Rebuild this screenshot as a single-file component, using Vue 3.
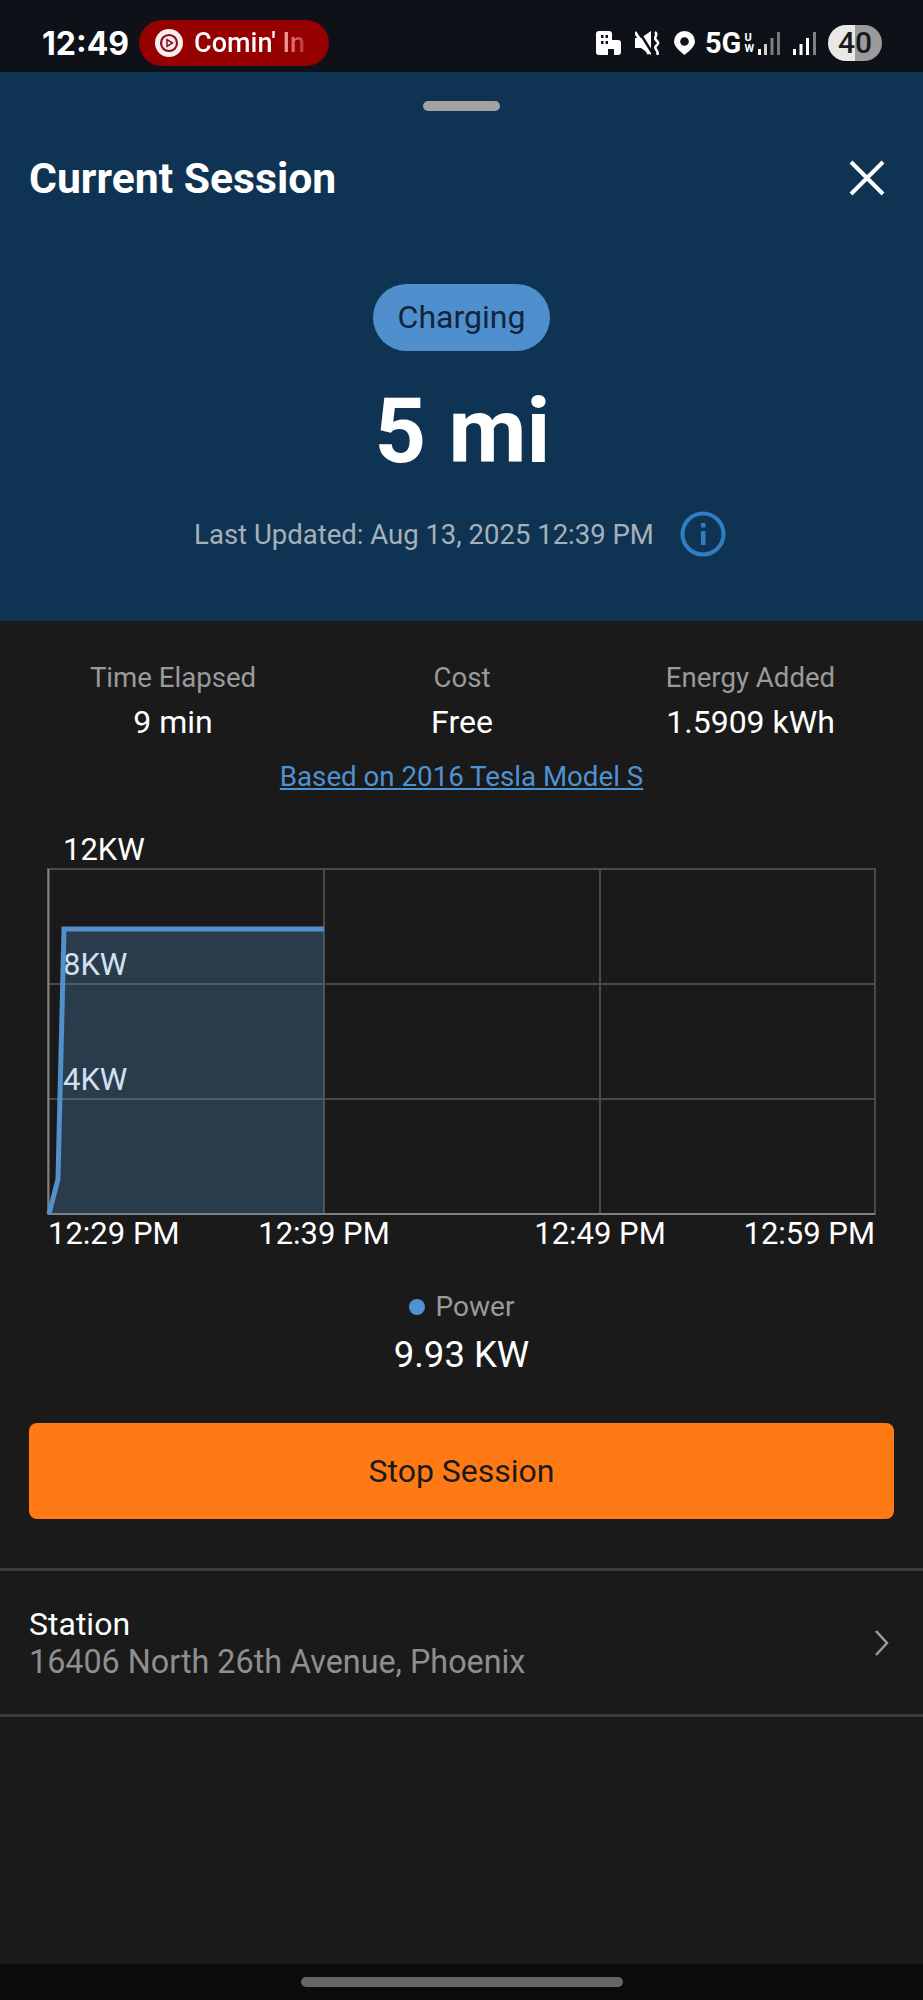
<script setup>
const stats = [
  { label: 'Time Elapsed', value: '9 min' },
  { label: 'Cost', value: 'Free' },
  { label: 'Energy Added', value: '1.5909 kWh' }
]
const times = [
  { x: 48, text: '12:29 PM', anchor: 'start' },
  { x: 324, text: '12:39 PM', anchor: 'middle' },
  { x: 600, text: '12:49 PM', anchor: 'middle' },
  { x: 875, text: '12:59 PM', anchor: 'end' }
]
const gridX = [324, 600]
const gridY = [983, 1098]
</script>

<template>
  <div class="screen">
    <div class="statusbar">
      <div class="status-left">
        <span class="clock">12:49</span>
        <div class="media-chip">
          <svg class="yt" width="28" height="28" viewBox="0 0 28 28">
            <circle cx="14" cy="14" r="14" fill="#f6eeee" />
            <circle cx="14" cy="14" r="8" fill="none" stroke="#8c0a1a" stroke-width="2.200" />
            <path d="M12 10.500v7l5.500-3.500z" fill="none" stroke="#8c0a1a" stroke-width="1.500" />
          </svg>
          <span class="chip-text">Comin' In</span>
        </div>
      </div>
      <div class="status-right">
        <svg width="25" height="24" viewBox="0 0 25 24" fill="#fff">
          <path d="M0 3a3 3 0 0 1 3-3h10a3 3 0 0 1 3 3v6h6a3 3 0 0 1 3 3v9a3 3 0 0 1-3 3h-4v-6h-6v6H3a3 3 0 0 1-3-3z" />
          <rect x="5" y="4" width="2.500" height="3" fill="#0e1118" />
          <rect x="9.500" y="4" width="2.500" height="3" fill="#0e1118" />
          <rect x="5" y="10" width="2.500" height="3" fill="#0e1118" />
          <rect x="9.500" y="10" width="2.500" height="3" fill="#0e1118" />
        </svg>
        <svg class="gap-mute" width="25" height="24" viewBox="0 0 25 24">
          <path d="M0 7h6l10-7v24L6 17H0z" fill="#fff" />
          <path d="M3-1l15 24" stroke="#0e1118" stroke-width="2.500" />
          <path d="M0 1l14 22" stroke="#fff" stroke-width="3" />
          <path d="M20 1c4 3-2 5 1 8s3 3 0 6 4 5 1 9" fill="none" stroke="#fff" stroke-width="2.500" />
        </svg>
        <svg class="gap-pin" width="21" height="24" viewBox="0 0 21 24">
          <path d="M10.500 0a10.500 10.500 0 0 1 10.500 10.500c0 5-6 10-10.500 13.500C6 20.500 0 15.500 0 10.500A10.500 10.500 0 0 1 10.500 0z" fill="#fff" />
          <circle cx="10.500" cy="10.500" r="4.300" fill="#0e1118" />
        </svg>
        <span class="net">5G</span>
        <span class="uw"><i>U</i><i>W</i></span>
        <svg class="bars" width="22" height="23" viewBox="0 0 22 23">
          <rect x="0" y="17" width="3" height="6" fill="#fff" />
          <rect x="6" y="12" width="3" height="11" fill="#cfcfcf" />
          <rect x="12.500" y="6" width="3" height="17" fill="#808080" />
          <rect x="19" y="0" width="3" height="23" fill="#777" />
        </svg>
        <svg class="bars second" width="23" height="23" viewBox="0 0 23 23">
          <rect x="0" y="17" width="3" height="6" fill="#fff" />
          <rect x="6.500" y="12" width="3" height="11" fill="#fff" />
          <rect x="13" y="6" width="3" height="17" fill="#fff" />
          <rect x="20" y="0" width="3" height="23" fill="#808080" />
        </svg>
        <div class="battery">40</div>
      </div>
    </div>

    <div class="hero">
      <div class="grabber"></div>
      <div class="title-row">
        <h1>Current Session</h1>
        <svg class="close" width="36" height="36" viewBox="0 0 36 36">
          <path d="M2 2l32 32M34 2L2 34" stroke="#fff" stroke-width="4" fill="none" />
        </svg>
      </div>
      <div class="pill">Charging</div>
      <div class="range">5 mi</div>
      <div class="updated">
        <span>Last Updated: Aug 13, 2025 12:39 PM</span>
        <svg width="46" height="46" viewBox="0 0 46 46">
          <circle cx="23" cy="23" r="20.500" fill="none" stroke="#2f7ec4" stroke-width="4" />
          <rect x="21" y="20" width="4.500" height="14" fill="#2f7ec4" />
          <rect x="21" y="12" width="4.500" height="4.500" fill="#2f7ec4" />
        </svg>
      </div>
    </div>

    <div class="body">
      <div class="stats">
        <div v-for="s in stats" :key="s.label" class="stat">
          <div class="stat-label">{{ s.label }}</div>
          <div class="stat-value">{{ s.value }}</div>
        </div>
      </div>
      <a class="vehicle">Based on 2016 Tesla Model S</a>

      <svg class="chart" width="923" height="441" viewBox="0 812 923 441">
        <text x="63" y="859" class="axis">12KW</text>
        <text x="63" y="974" class="axis">8KW</text>
        <text x="63" y="1089" class="axis">4KW</text>
        <rect x="48" y="868" width="827" height="345" fill="none" stroke="#4a4a4a" stroke-width="2" />
        <line v-for="x in gridX" :key="x" :x1="x" :x2="x" y1="868" y2="1213" stroke="#4a4a4a" stroke-width="2" />
        <line v-for="y in gridY" :key="y" x1="48" x2="875" :y1="y" :y2="y" stroke="#4a4a4a" stroke-width="2" />
        <line x1="48.500" x2="48.500" y1="868" y2="1213" stroke="#808080" stroke-width="2" />
        <line x1="48" x2="875" y1="1213" y2="1213" stroke="#808080" stroke-width="2" />
        <path d="M49 1213L58 1178L64 928H324V1213z" fill="rgba(85,150,210,0.28)" />
        <path d="M49 1213L58 1178L64 928H324" fill="none" stroke="#5190cb" stroke-width="5" />
        <text v-for="t in times" :key="t.text" :x="t.x" y="1243" :text-anchor="t.anchor" class="axis">{{ t.text }}</text>
      </svg>

      <div class="legend"><span class="dot"></span>Power</div>
      <div class="power">9.93 KW</div>

      <button class="stop">Stop Session</button>

      <div class="station">
        <div>
          <div class="station-title">Station</div>
          <div class="station-addr">16406 North 26th Avenue, Phoenix</div>
        </div>
        <svg width="16" height="26" viewBox="0 0 16 26">
          <path d="M2 1l11 12L2 25" fill="none" stroke="#9a9a9a" stroke-width="2.500" />
        </svg>
      </div>
    </div>

    <div class="navbar"><div class="home"></div></div>
  </div>
</template>

<style>
body {
  background: #1a1a1a;
}
</style>

<style scoped>
.screen {
  width: 923px;
  height: 2000px;
  display: flex;
  flex-direction: column;
  background: #1a1a1a;
  font-family: Roboto, "Liberation Sans", sans-serif;
  overflow: hidden;
}

.statusbar {
  height: 72px;
  flex: none;
  display: flex;
  align-items: center;
  justify-content: space-between;
  background: #0e1118;
  padding: 14px 41px 0 42px;
  box-sizing: border-box;
}

.status-left,
.status-right {
  display: flex;
  align-items: center;
}

.clock {
  color: #fff;
  font-size: 32px;
  font-weight: 700;
  font-family: Inter, Roboto, sans-serif;
}

.media-chip {
  margin-left: 10px;
  width: 190px;
  height: 46px;
  border-radius: 23px;
  background: #960000;
  display: flex;
  align-items: center;
  padding-left: 16px;
  box-sizing: border-box;
}

.chip-text {
  margin-left: 11px;
  font-size: 27px;
  font-weight: 500;
  white-space: nowrap;
  width: 114px;
  overflow: hidden;
  background: linear-gradient(90deg, #fff 72%, #e88 82%, #b33 97%);
  -webkit-background-clip: text;
  background-clip: text;
  color: transparent;
}

.gap-mute {
  margin-left: 14px;
}

.gap-pin {
  margin-left: 14px;
}

.net {
  margin-left: 10px;
  color: #fff;
  font-size: 29px;
  font-weight: 700;
}

.uw {
  display: flex;
  flex-direction: column;
  margin-left: 3px;
  color: #fff;
  font-size: 11px;
  line-height: 11px;
  font-weight: 700;
}

.uw i {
  font-style: normal;
}

.bars {
  margin-left: 4px;
}

.bars.second {
  margin-left: 13px;
}

.battery {
  margin-left: 12px;
  width: 54px;
  height: 36px;
  border-radius: 18px;
  background: linear-gradient(90deg, #e8e8e8 50%, #9b9b9b 50%);
  color: #1a1a1a;
  font-size: 30px;
  font-weight: 500;
  line-height: 36px;
  text-align: center;
}

.hero {
  height: 549px;
  flex: none;
  box-sizing: border-box;
  background: #0f3453;
  display: flex;
  flex-direction: column;
  align-items: center;
  padding-top: 29px;
}

.grabber {
  width: 77px;
  height: 10px;
  border-radius: 5px;
  background: #a3a3a3;
}

.title-row {
  align-self: stretch;
  display: flex;
  justify-content: space-between;
  align-items: center;
  padding: 0 38px 0 29px;
  margin-top: 37px;
  height: 60px;
}

h1 {
  margin: 0;
  color: #fff;
  font-size: 42.700px;
  font-weight: 700;
}

.pill {
  margin-top: 76px;
  width: 177px;
  height: 67px;
  border-radius: 34px;
  background: #4f8fcd;
  color: #10253d;
  font-size: 32px;
  line-height: 67px;
  text-align: center;
}

.range {
  margin-top: 29px;
  margin-left: 2px;
  color: #fff;
  font-size: 90px;
  font-weight: 700;
  line-height: 103px;
}

.updated {
  margin-top: 28px;
  margin-right: 3px;
  display: flex;
  align-items: center;
  gap: 26px;
  color: #a7b0b9;
  font-size: 27.500px;
}

.body {
  flex: 1;
  display: flex;
  flex-direction: column;
  align-items: center;
}

.stats {
  align-self: stretch;
  display: grid;
  grid-template-columns: 346px 232px 345px;
  margin-top: 39px;
  text-align: center;
}

.stat-label {
  color: #9a9a9a;
  font-size: 27.600px;
  line-height: 36px;
}

.stat-value {
  margin-top: 7px;
  color: #fff;
  font-size: 32px;
  line-height: 38px;
}

.vehicle {
  margin-top: 18px;
  color: #4f92d2;
  font-size: 27.700px;
  line-height: 36px;
  text-decoration: underline;
}

.chart {
  display: block;
  margin-top: 18px;
  flex: none;
}

.axis {
  fill: #fff;
  font-size: 31px;
  font-family: Roboto, sans-serif;
}

.legend {
  margin-top: 35px;
  display: flex;
  align-items: center;
  color: #9a9a9a;
  font-size: 28px;
  line-height: 36px;
}

.dot {
  width: 16px;
  height: 16px;
  border-radius: 50%;
  background: #4f92d2;
  margin-right: 11px;
}

.power {
  margin-top: 8px;
  color: #fff;
  font-size: 36.500px;
  line-height: 44px;
}

.stop {
  margin-top: 46px;
  width: 865px;
  height: 96px;
  border: none;
  border-radius: 8px;
  background: #ff7a14;
  color: #1a1a1a;
  font-family: inherit;
  font-size: 32px;
  flex: none;
}

.station {
  align-self: stretch;
  margin-top: 49px;
  height: 149px;
  box-sizing: border-box;
  border-top: 3px solid #3c3c3c;
  border-bottom: 3px solid #3c3c3c;
  display: flex;
  justify-content: space-between;
  align-items: center;
  padding: 0 33px 0 29px;
}

.station-title {
  color: #fff;
  font-size: 32px;
  line-height: 38px;
}

.station-addr {
  color: #8f8f8f;
  font-size: 32.300px;
  line-height: 38px;
}

.navbar {
  height: 36px;
  flex: none;
  background: #0b0b0b;
  display: flex;
  justify-content: center;
}

.home {
  width: 322px;
  height: 10px;
  border-radius: 5px;
  background: #666;
  margin-top: 13px;
}
</style>
